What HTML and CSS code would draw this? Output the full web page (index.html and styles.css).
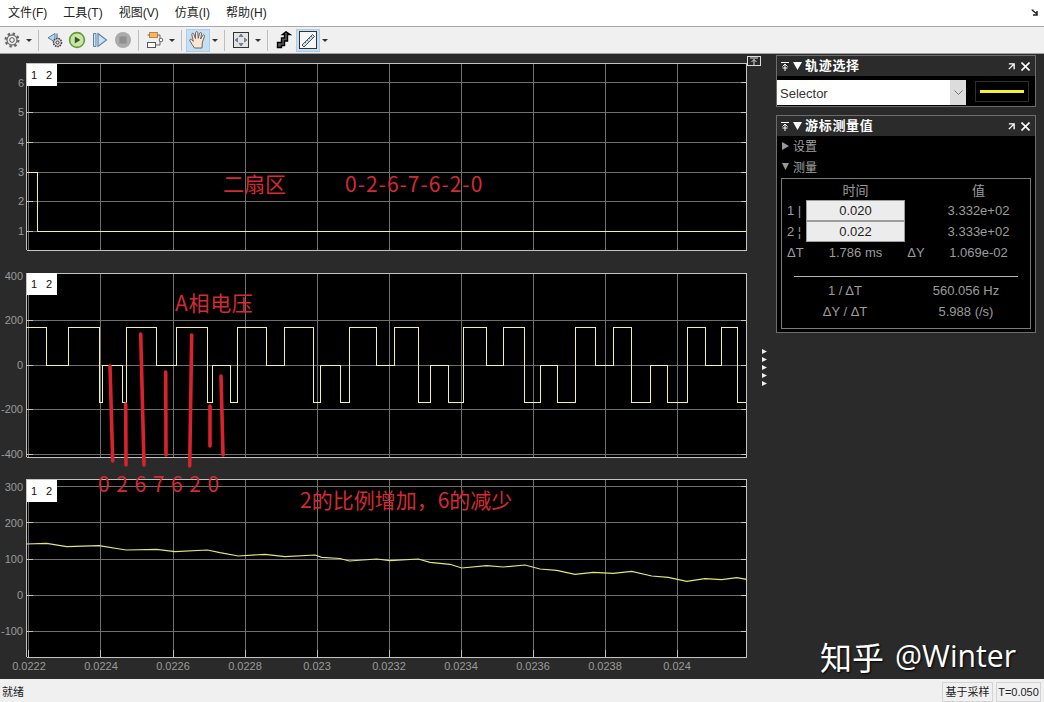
FILE: index.html
```html
<!DOCTYPE html>
<html lang="zh">
<head>
<meta charset="utf-8">
<title>Scope</title>
<link rel="stylesheet" href="styles.css">
</head>
<body>
<div class="app">
  <header class="menubar">
    <nav class="menus">
      <span>文件(F)</span><span>工具(T)</span><span>视图(V)</span><span>仿真(I)</span><span>帮助(H)</span>
    </nav>
    <svg class="dock-arrow" width="9" height="8" viewBox="0 0 9 8"><path d="M1 1L6 5M6 2V6H2" fill="none" stroke="#222" stroke-width="1.5"/><path d="M0 0H3" stroke="#888"/></svg>
  </header>

  <div class="toolbar">
    <span class="tb"><svg width="18" height="18" viewBox="0 0 18 18"><circle cx="9" cy="9" r="6.4" fill="#ddd" stroke="#666" stroke-width="2.2" stroke-dasharray="2.4 2.6"/><circle cx="9" cy="9" r="5" fill="#eee" stroke="#555"/><circle cx="9" cy="9" r="2.3" fill="#f4f4f4" stroke="#555"/></svg></span>
    <span class="dd"></span><span class="sep"></span>
    <span class="tb tb-n first"><svg width="18" height="18" viewBox="0 0 18 18"><path d="M9 2.5V11L2 6.8Z" fill="#bcd3ea" stroke="#557ca6"/><path d="M11 2.5V9" stroke="#557ca6" stroke-width="1.3"/><circle cx="11.5" cy="11.5" r="4" fill="#ddd" stroke="#444" stroke-width="1.6" stroke-dasharray="1.6 .8"/><circle cx="11.5" cy="11.5" r="1.5" fill="#fff" stroke="#333"/></svg></span>
    <span class="tb tb-n"><svg width="18" height="18" viewBox="0 0 18 18"><circle cx="9" cy="9" r="7.4" fill="#cde3a8" stroke="#5d9e3a" stroke-width="1.6"/><path d="M6.8 5.4L12.4 9L6.8 12.6Z" fill="#2f5a22"/></svg></span>
    <span class="tb tb-n step"><svg width="16" height="18" viewBox="0 0 16 18"><path d="M1.5 2.5H4V15.5H1.5Z" fill="#cfe0f0" stroke="#5a80a8"/><path d="M6 2.5L14.5 9L6 15.5Z" fill="#cfe0f0" stroke="#5a80a8" stroke-width="1.1"/></svg></span>
    <span class="tb tb-n step"><svg width="18" height="18" viewBox="0 0 18 18"><circle cx="9" cy="9" r="8" fill="#ababab"/><rect x="5.5" y="5.5" width="7" height="7" fill="#8e8e8e"/></svg></span>
    <span class="sep"></span>
    <span class="tb first"><svg width="18" height="18" viewBox="0 0 18 18"><rect x="3.5" y="1.5" width="8" height="5" fill="#f5b46a" stroke="#c9813a"/><rect x="1.5" y="11.5" width="8" height="5" fill="#fff" stroke="#555"/><path d="M1.5 4H3.5M11.5 4H14V8.5M9.5 14H14V9.5" fill="none" stroke="#666"/><circle cx="15" cy="9" r="1.8" fill="#fff" stroke="#666"/></svg></span>
    <span class="dd"></span><span class="sep"></span>
    <span class="tb first on"><svg width="20" height="20" viewBox="0 0 20 20"><path d="M6.5 18C5 15.5 2.5 12.5 1.8 10.5C1.4 9.2 2.8 8.7 3.7 9.7L5.3 11.4L3.8 4.6C3.5 3.2 5.3 2.7 5.8 4L7.4 8.6L7.6 2.6C7.7 1.2 9.7 1.2 9.8 2.6L10.2 8.3L11.7 3.2C12.1 1.9 13.9 2.4 13.6 3.8L12.6 9L14.7 5.4C15.4 4.3 17 5 16.5 6.3L14.4 12.2C13.9 13.8 14.4 16 14 18Z" fill="#fde6d0" stroke="#5a5a5a" stroke-width=".9"/></svg></span>
    <span class="dd"></span><span class="sep"></span>
    <span class="tb first"><svg width="18" height="18" viewBox="0 0 18 18"><rect x="1.5" y="1.5" width="15" height="15" fill="#e4e4e4" stroke="#333"/><path d="M9 3L11 5.5H7ZM9 15L7 12.5H11ZM3 9L5.5 7V11ZM15 9L12.5 11V7Z" fill="#6a8fb3" stroke="#445"  stroke-width=".5"/></svg></span>
    <span class="dd"></span><span class="sep"></span>
    <span class="tb first"><svg width="16" height="18" viewBox="0 0 16 18"><path d="M1.5 16.5V11.5H5.5V7H8.5V3.5L6.5 3.5L10 .8L14 3.5H11.5V10H8.5V14.5H5.5V16.5Z" fill="#555" stroke="#000" stroke-width="1.4"/></svg></span>
    <span class="tb on"><svg width="18" height="18" viewBox="0 0 18 18"><rect x=".5" y=".5" width="17" height="17" fill="#f6f6f6" stroke="#333"/><path d="M3 14L13.5 3.5L15.5 5.5L5 16Z" fill="#c9dcec" stroke="#444" stroke-width=".9"/><path d="M6 11L7 12M8 9L9.5 10.5M10 7L11 8M12 5L13.5 6.5" stroke="#444" stroke-width=".7"/></svg></span>
    <span class="dd"></span>
  </div>

  <main class="workspace">
    <section class="scope">
      <svg class="plot plot-a" width="777" height="188" viewBox="0 63 777 188">
        <rect class="canvas" x="26" y="63" width="721" height="187"/>
        <path class="grid" d="M28.5 64V250M100.5 64V250M173.5 64V250M245.5 64V250M317.5 64V250M389.5 64V250M461.5 64V250M533.5 64V250M605.5 64V250M677.5 64V250M27 82.5H747M27 112.5H747M27 142.5H747M27 172.5H747M27 201.5H747M27 231.5H747"/>
        <path class="axis" d="M26.5 250V63.5H746.5V250.5H26.5M27 112.5H33M27 142.5H33M27 172.5H33M27 201.5H33M27 231.5H33M741 82.5H747M741 112.5H747M741 142.5H747M741 172.5H747M741 201.5H747M741 231.5H747"/>
        <path class="trace" d="M27 172.5H37.5V231.5H746"/>
        <rect class="legend" x="27" y="64" width="30" height="22"/>
        <text class="legend-t" x="34" y="79" text-anchor="middle">1</text><text class="legend-t" x="49" y="79" text-anchor="middle">2</text>
        <g class="ticks" text-anchor="end">
          <text x="24" y="87">6</text><text x="24" y="116">5</text><text x="24" y="146">4</text><text x="24" y="176">3</text><text x="24" y="205">2</text><text x="24" y="235">1</text>
        </g>
      </svg>

      <svg class="plot plot-b" width="777" height="185" viewBox="0 273 777 185">
        <rect class="canvas" x="26" y="273" width="721" height="184"/>
        <path class="grid" d="M28.5 274V457M100.5 274V457M173.5 274V457M245.5 274V457M317.5 274V457M389.5 274V457M461.5 274V457M533.5 274V457M605.5 274V457M677.5 274V457M27 320.5H747M27 365.5H747M27 409.5H747M27 454.5H747"/>
        <path class="axis" d="M26.5 457V273.5H746.5V457.5H26.5M27 320.5H33M27 365.5H33M27 409.5H33M27 454.5H33M741 320.5H747M741 365.5H747M741 409.5H747M741 454.5H747"/>
        <path class="trace" d="M26 327.5H46.5V365.5H68.5V327.5H99.5V402.5H102.5V365.5H122.5V402.5H126.5V327.5H156.5V365.5H176.5V327.5H207.5V402.5H212.5V365.5H230.5V402.5H237.5V327.5H266.5V365.5H284.5V327.5H313.5V402.5H320.5V365.5H340.5V402.5H349.5V327.5H376.5V365.5H394.5V327.5H418.5V402.5H430.5V365.5H448.5V402.5H463.5V327.5H486.5V365.5H503.5V327.5H524.5V402.5H540.5V365.5H557.5V402.5H575.5V327.5H595.5V365.5H613.5V327.5H631.5V402.5H650.5V365.5H667.5V402.5H687.5V327.5H705.5V365.5H721.5V327.5H737.5V402.5H746"/>
        <rect class="legend" x="27" y="273" width="30" height="22"/>
        <text class="legend-t" x="34" y="288" text-anchor="middle">1</text><text class="legend-t" x="49" y="288" text-anchor="middle">2</text>
        <g class="ticks" text-anchor="end">
          <text x="23" y="280">400</text><text x="23" y="324">200</text><text x="23" y="369">0</text><text x="23" y="413">-200</text><text x="23" y="458">-400</text>
        </g>
      </svg>

      <svg class="plot plot-c" width="777" height="200" viewBox="0 479 777 200">
        <rect class="canvas" x="26" y="479" width="721" height="178"/>
        <path class="grid" d="M28.5 480V657M100.5 480V657M173.5 480V657M245.5 480V657M317.5 480V657M389.5 480V657M461.5 480V657M533.5 480V657M605.5 480V657M677.5 480V657M27 486.5H747M27 522.5H747M27 559.5H747M27 595.5H747M27 631.5H747"/>
        <path class="axis" d="M26.5 657V479.5H746.5V657.5H26.5M27 522.5H33M27 559.5H33M27 595.5H33M27 631.5H33M741 486.5H747M741 522.5H747M741 559.5H747M741 595.5H747M741 631.5H747M28.5 650V657M100.5 650V657M173.5 650V657M245.5 650V657M317.5 650V657M389.5 650V657M461.5 650V657M533.5 650V657M605.5 650V657M677.5 650V657"/>
        <polyline class="curve" points="26,544 46.7,543.3 66.7,546.7 99,545.7 126,550 156.7,549.3 175,551.7 207.3,550 220,552.7 238.3,556 265,554.3 285,556.7 315,555 321.7,557.3 340,558.5 349.3,561 376.7,559 390,560.7 418.3,559 430,562.3 450,564.3 461.7,568 486.7,565.7 503.3,567 525,565 540,569 556.7,570.3 575,574.3 593.3,572.3 613.3,573.3 631.7,571.3 651.7,576 668.3,577.3 686.7,581.3 705,578.7 721.7,579.7 736.7,577.7 746.7,579.3"/>
        <rect class="legend" x="27" y="480" width="30" height="22"/>
        <text class="legend-t" x="34" y="495" text-anchor="middle">1</text><text class="legend-t" x="49" y="495" text-anchor="middle">2</text>
        <g class="ticks" text-anchor="end">
          <text x="23" y="491">300</text><text x="23" y="527">200</text><text x="23" y="563">100</text><text x="23" y="599">0</text><text x="23" y="635">-100</text>
        </g>
        <g class="ticks" text-anchor="middle">
          <text x="29" y="670">0.0222</text><text x="101" y="670">0.0224</text><text x="173" y="670">0.0226</text><text x="245" y="670">0.0228</text><text x="317" y="670">0.023</text><text x="389" y="670">0.0232</text><text x="461" y="670">0.0234</text><text x="533" y="670">0.0236</text><text x="605" y="670">0.0238</text><text x="677" y="670">0.024</text>
        </g>
      </svg>

      <svg class="undock" width="14" height="11" viewBox="0 0 14 11"><rect x=".5" y=".5" width="13" height="9" fill="none" stroke="#ddd"/><path d="M3 2H11M7 9V3.5M4.5 6L7 3.5L9.5 6" fill="none" stroke="#ddd"/></svg>
      <svg class="collapse" width="6" height="37" viewBox="0 0 6 37"><path d="M0 0L5 2.5L0 5ZM0 8L5 10.5L0 13ZM0 16L5 18.5L0 21ZM0 24L5 26.5L0 29ZM0 32L5 34.5L0 37Z" fill="#eee"/></svg>

      <svg class="notes" width="777" height="625" viewBox="0 54 777 625">
        <g class="strokes">
          <path d="M110 366L112.7 461M125.7 404L126 465M140.7 334L144 465M165.7 372L166 455M191.7 335L189.7 466M210 406V446M221 376L223 455"/>
        </g>
        <text class="note" x="223" y="192">二扇区</text>
        <text class="note spaced" x="345" y="192">0-2-6-7-6-2-0</text>
        <text class="note phase" x="175" y="311">A相电压</text>
        <text class="note digits" x="98" y="492">0 2 6 7 6 2 0</text>
        <text class="note" x="300" y="508">2的比例增加，6的减少</text>
      </svg>
    </section>

    <aside class="side">
      <section class="panel panel-trace">
        <div class="panel-head">
          <svg class="pin" width="8" height="9" viewBox="0 0 8 9"><path d="M0 .5H8M4 9V2.5M1.5 4.5L4 2L6.5 4.5M1.5 6H6.5" fill="none" stroke="#fff"/></svg>
          <svg class="tri" width="9" height="8" viewBox="0 0 9 8"><path d="M0 0H9L4.5 8Z" fill="#fff"/></svg>
          <h2>轨迹选择</h2>
          <svg class="pop" width="7" height="7" viewBox="0 0 8 8"><path d="M1 1H7V7M7 1L1 7" fill="none" stroke="#fff" stroke-width="1.6"/></svg>
          <svg class="close" width="9" height="9" viewBox="0 0 9 9"><path d="M.5 .5L8.5 8.5M8.5 .5L.5 8.5" stroke="#fff" stroke-width="1.6"/></svg>
        </div>
        <div class="trace-row">
          <div class="combo"><span class="combo-text">Selector</span><span class="combo-btn"><svg width="9" height="5" viewBox="0 0 9 5"><path d="M.5 .5L4.5 4.5L8.5 .5" fill="none" stroke="#777"/></svg></span></div>
          <div class="swatch"><span class="swatch-line"></span></div>
        </div>
      </section>

      <section class="panel panel-measure">
        <div class="panel-head">
          <svg class="pin" width="8" height="9" viewBox="0 0 8 9"><path d="M0 .5H8M4 9V2.5M1.5 4.5L4 2L6.5 4.5M1.5 6H6.5" fill="none" stroke="#fff"/></svg>
          <svg class="tri" width="9" height="8" viewBox="0 0 9 8"><path d="M0 0H9L4.5 8Z" fill="#fff"/></svg>
          <h2>游标测量值</h2>
          <svg class="pop" width="7" height="7" viewBox="0 0 8 8"><path d="M1 1H7V7M7 1L1 7" fill="none" stroke="#fff" stroke-width="1.6"/></svg>
          <svg class="close" width="9" height="9" viewBox="0 0 9 9"><path d="M.5 .5L8.5 8.5M8.5 .5L.5 8.5" stroke="#fff" stroke-width="1.6"/></svg>
        </div>
        <div class="section-row"><svg width="7" height="8" viewBox="0 0 7 8"><path d="M0 0L7 4L0 8Z" fill="#999"/></svg><span>设置</span></div>
        <div class="section-row"><svg width="7" height="7" viewBox="0 0 7 7"><path d="M0 0H7L3.5 7Z" fill="#999"/></svg><span>测量</span></div>
        <div class="measure-box">
          <div class="cursor-grid">
            <span></span><span class="cell">时间</span><span></span><span class="cell">值</span>
            <span class="cell label">1 |</span><span class="input">0.020</span><span></span><span class="cell">3.332e+02</span>
            <span class="cell label">2 ¦</span><span class="input">0.022</span><span></span><span class="cell">3.333e+02</span>
            <span class="cell label">ΔT</span><span class="cell">1.786 ms</span><span class="cell">ΔY</span><span class="cell">1.069e-02</span>
          </div>
          <div class="rule"></div>
          <div class="rate-grid">
            <span class="cell">1 / ΔT</span><span class="cell">560.056 Hz</span>
            <span class="cell">ΔY / ΔT</span><span class="cell">5.988 (/s)</span>
          </div>
        </div>
      </section>
    </aside>

    <div class="watermark"><span class="wm-cn">知乎</span><span class="wm-en">@Winter</span></div>
  </main>

  <footer class="statusbar">
    <span class="status-text">就绪</span>
    <span class="status-box sample">基于采样</span>
    <span class="status-box time">T=0.050</span>
  </footer>
</div>
</body>
</html>
```

FILE: styles.css
```css
* { box-sizing: border-box; }
html, body { margin: 0; padding: 0; }
body {
  width: 1044px;
  height: 702px;
  overflow: hidden;
  font-family: "Liberation Sans", "Noto Sans CJK SC", sans-serif;
}
.app { display: flex; flex-direction: column; width: 1044px; height: 702px; }

/* menu */
.menubar {
  height: 27px;
  flex: none;
  display: flex;
  align-items: center;
  justify-content: space-between;
  background: #fff;
  border-bottom: 1px solid #a9a9a9;
  padding: 0 4px 0 8px;
}
.menus { display: flex; gap: 16px; font-size: 12px; line-height: 26px; color: #222; }
.dock-arrow { display: block; }

/* toolbar */
.toolbar {
  height: 27px;
  flex: none;
  display: flex;
  align-items: center;
  background: #f0f0f0;
  border-bottom: 1px solid #a0a0a0;
}
.tb { width: 24px; height: 23px; display: flex; align-items: center; justify-content: center; flex: none; }
.tb-n { width: 22px; }
.tb.first { margin-left: 4px; }
.tb-n.first { margin-left: 5px; }
.tb-n.step { margin-left: 1px; }
.tb.on { background: #c6dff3; border: 1px solid #aacde8; }
.dd { width: 10px; height: 23px; flex: none; display: flex; align-items: center; justify-content: center; }
.dd::after { content: ""; border-left: 3px solid transparent; border-right: 3px solid transparent; border-top: 3px solid #333; }
.sep { width: 1px; height: 21px; margin-left: 4px; background: #bdbdbd; flex: none; }

/* workspace */
.workspace {
  position: relative;
  flex: 1;
  display: flex;
  align-items: flex-start;
  background: #2a2a2a;
  min-height: 0;
}
.scope {
  position: relative;
  width: 776px;
  height: 100%;
  flex: none;
  padding-top: 9px;
}
.plot { display: block; overflow: visible; }
.plot-b { margin-top: 22px; }
.plot-c { margin-top: 21px; }
.canvas { fill: #000; }
.grid { fill: none; stroke: #6f6f6f; stroke-width: 1; shape-rendering: crispEdges; }
.axis { fill: none; stroke: #c4c4c4; stroke-width: 1; shape-rendering: crispEdges; }
.trace { fill: none; stroke: #f2f296; stroke-width: 1; shape-rendering: crispEdges; }
.curve { fill: none; stroke: #e4e47c; stroke-width: 1.2; }
.legend { fill: #fff; }
.legend-t { font-size: 11px; fill: #111; }
.ticks { font-size: 11px; fill: #9a9a9a; }
.undock { position: absolute; left: 747px; top: 2px; }
.collapse { position: absolute; left: 762px; top: 295px; }
.notes { position: absolute; left: 0; top: 0; overflow: visible; pointer-events: none; }
.strokes path { fill: none; stroke: #d8232e; stroke-width: 3.6; stroke-linecap: round; }
.note { font-family: "Noto Sans CJK SC", sans-serif; font-size: 21px; fill: #d42a33; }
.spaced { letter-spacing: 1px; }
.phase { letter-spacing: 0.7px; }
.digits { letter-spacing: 0.95px; }

/* side panels */
.side {
  width: 260px;
  flex: none;
  margin-top: 1px;
  display: flex;
  flex-direction: column;
  gap: 8px;
}
.panel { border: 1px solid #6d6d6d; background: #000; color: #a8a8a8; }
.panel-head {
  height: 20px;
  display: flex;
  align-items: center;
  background: #2b2b2b;
  padding: 0 5px 0 4px;
}
.panel-head h2 {
  margin: 0 0 2px 3px;
  flex: 1;
  font-family: "Noto Sans CJK SC", sans-serif;
  font-size: 13px;
  font-weight: 700;
  line-height: 18px;
  letter-spacing: 0.7px;
  color: #fff;
}
.pin { margin-right: 4px; }
.pop { margin-right: 6px; }
.panel-trace { height: 52px; }
.trace-row { display: flex; padding: 4px 6px 0 0; justify-content: space-between; }
.combo { width: 189px; height: 25px; display: flex; background: #fff; }
.combo-text { flex: 1; font-size: 13px; line-height: 25px; padding-top: 1px; color: #333; padding-left: 3px; }
.combo-btn { width: 16px; background: #dcdcdc; display: flex; align-items: center; justify-content: center; }
.swatch { width: 54px; height: 21px; margin-top: 1px; border: 1px solid #2e2e2e; display: flex; align-items: center; justify-content: center; }
.swatch-line { width: 44px; height: 3px; background: #f2f22e; }

.panel-measure { height: 218px; }
.section-row { height: 21px; display: flex; align-items: center; gap: 4px; padding: 0 0 2px 5px; font-size: 12px; font-family: "Noto Sans CJK SC", sans-serif; color: #a0a0a0; }
.measure-box { margin: 0 4px; height: 151px; border: 1px solid #7a7a7a; }
.cursor-grid {
  display: grid;
  grid-template-columns: 24px 99px 22px 103px;
  grid-template-rows: 21px 21px 21px 21px;
  font-size: 13px;
  color: #9c9c9c;
}
.cell { display: flex; align-items: center; justify-content: center; white-space: nowrap; }
.label { justify-content: flex-start; padding-left: 5px; }
.input {
  display: flex;
  align-items: center;
  justify-content: center;
  background: #ececec;
  border: 1px solid #9c9c9c;
  color: #222;
}
.rule { height: 1px; margin: 13px 12px 0 12px; background: #b5b5b5; }
.rate-grid {
  display: grid;
  grid-template-columns: 126px 116px;
  grid-template-rows: 21px 21px;
  padding-top: 3px;
  font-size: 13px;
  color: #9c9c9c;
}

/* watermark */
.watermark {
  position: absolute;
  left: 820px;
  top: 583px;
  display: flex;
  align-items: center;
  gap: 11px;
  color: #fff;
  line-height: 38px;
  text-shadow: 1px 1px 2px #000;
}
.wm-cn { font-family: "Noto Sans CJK SC", sans-serif; font-size: 32px; }
.wm-en { font-family: "Open Sans", sans-serif; font-size: 30.2px; }

/* status */
.statusbar {
  height: 23px;
  flex: none;
  display: flex;
  align-items: flex-end;
  gap: 3px;
  background: #f0f0f0;
  padding-right: 3px;
}
.status-text { margin-right: auto; padding-left: 2px; align-self: center; font-size: 11px; color: #222; }
.status-box { height: 20px; border: 1px solid #d4d4d4; font-size: 11px; line-height: 18px; color: #222; text-align: center; }
.sample { width: 51px; }
.time { width: 45px; }
```
